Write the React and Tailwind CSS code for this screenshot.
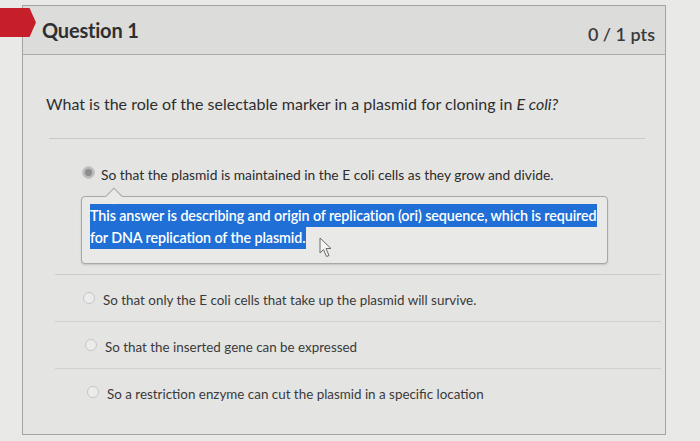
import React from 'react';

const options = [
    { text: 'So that only the E coli cells that take up the plasmid will survive.', pl: 'pl-[60px]' },
    { text: 'So that the inserted gene can be expressed', pl: 'pl-[62px]' },
    { text: 'So a restriction enzyme can cut the plasmid in a specific location', pl: 'pl-[64px]' },
];

function Radio({ checked }) {
    if (checked) {
        return (
            <span className="w-[13px] h-[13px] rounded-full bg-[#b9b9b9] border border-[#c9c9c9] flex items-center justify-center shrink-0">
                <span className="w-[7px] h-[7px] rounded-full bg-[#8d8d8d]" />
            </span>
        );
    }
    return <span className="w-[12px] h-[12px] rounded-full border border-[#c6c6c6] bg-[#ececec] shrink-0" />;
}

function Cursor() {
    return (
        <svg className="absolute left-[237px] top-[40px]" width="16" height="22" viewBox="0 0 16 22">
            <path d="M1 1 L1 16 L4.5 12.5 L7.5 19.5 L10 18.5 L7 11.5 L12 11.5 Z" fill="#f4f4f4" stroke="#6b6b6b" strokeWidth="1" strokeLinejoin="round" />
        </svg>
    );
}

export default function App() {
    return (
        <div className="w-[700px] h-[441px] bg-[#e9e9e8] relative overflow-hidden pt-[5px] pl-[22px]" style={{ fontFamily: 'Lato, "Open Sans", sans-serif' }}>
            {/* red flag marker */}
            <div className="absolute left-0 top-[8px] w-[36px] h-[29px] bg-[#c61f2a] [clip-path:polygon(0_0,82%_0,100%_50%,82%_100%,0_100%)]" />

            <div className="w-[644px] h-[430px] border border-[#a3a3a3] bg-[#e4e4e3] text-[#2f2f2f]">
                {/* header */}
                <div className="h-[49px] bg-[#dcdcdb] border-b border-[#a9a9a9] flex items-center justify-between pl-[19px] pr-[10px]">
                    <h2 className="text-[20px] font-bold tracking-[-0.2px]">Question 1</h2>
                    <span className="text-[18px] font-semibold mt-[8px] text-[#3a3a3a]">0 / 1 pts</span>
                </div>

                {/* question */}
                <div className="pl-[23px] pt-[37px] pb-[22px] text-[16px] text-[#2e2e2e]">
                    What is the role of the selectable marker in a plasmid for cloning in <i>E coli?</i>
                </div>
                <div className="ml-[26px] mr-[20px] border-t border-[#c9c9c9]" />

                {/* selected answer */}
                <div className="pl-[59px] pt-[20px] flex items-center gap-[6px] text-[13.8px] text-[#2c2c2c]">
                    <Radio checked />
                    <span className="mt-[6px]">So that the plasmid is maintained in the E coli cells as they grow and divide.</span>
                </div>

                {/* feedback */}
                <div className="ml-[58px] mt-[10px] w-[527px] h-[68px] relative border border-[#a8a8a8] rounded-[4px] bg-[#e9e9e8] shadow-[0_1px_2px_rgba(0,0,0,0.15)] pl-[8px] pt-[8px] pr-[4px]">
                    <span className="absolute -top-[7px] left-[26px] w-[12px] h-[12px] rotate-45 bg-[#e9e9e8] border-l border-t border-[#a8a8a8]" />
                    <p className="text-[14.3px] font-semibold leading-[22px] text-white whitespace-nowrap tracking-[-0.1px]">
                        <span className="bg-[#1f6fd7] [box-decoration-break:clone] py-[3px]">
                            This answer is describing and origin of replication (ori) sequence, which is required
                            <br />
                            for DNA replication of the plasmid.
                        </span>
                    </p>
                    <Cursor />
                </div>

                <div className="ml-[32px] mr-[4px] mt-[10px] border-t border-[#cdcdcd]" />

                {/* other options */}
                {options.map((o, i) => (
                    <div key={i}>
                        <div className={`${o.pl} h-[46px] flex items-center gap-[8px] text-[13.4px] text-[#3a3a3a]`}>
                            <Radio />
                            <span className="mt-[4px]">{o.text}</span>
                        </div>
                        {i < options.length - 1 && <div className="ml-[32px] mr-[4px] border-t border-[#d0d0d0]" />}
                    </div>
                ))}
            </div>
        </div>
    );
}
